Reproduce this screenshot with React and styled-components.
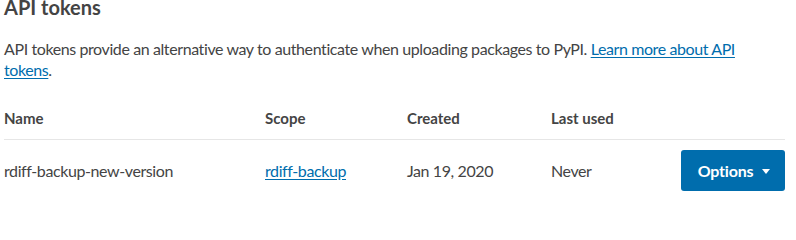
import React from "react";
import styled, { createGlobalStyle } from "styled-components";

const Global = createGlobalStyle`
  html, body { margin: 0; padding: 0; background: #fff; }
  body { font-family: "Lato", "Noto Sans", sans-serif; color: #444; }
`;

const Page = styled.div`
  padding: 0 11px 0 4px;
  margin-top: -5px;
`;

const Heading = styled.h2`
  margin: 0;
  font-size: 20px;
  font-weight: 700;
  line-height: 24px;
  color: #444;
`;

const Intro = styled.p`
  margin: 19px 0 0;
  font-size: 16px;
  line-height: 21px;
  letter-spacing: -0.4px;
`;

const Link = styled.a`
  color: #006dad;
  text-decoration: underline;
  text-underline-offset: 2px;
`;

const Row = styled.div`
  display: grid;
  grid-template-columns: 261px 142px 144px 1fr auto;
  align-items: center;
  border-bottom: ${(p) => (p.$head ? "1px solid #e6e6e6" : "none")};
  padding: ${(p) => (p.$head ? "28px 0 11px" : "10px 0 0")};
  font-size: ${(p) => (p.$head ? "15px" : "16px")};
  line-height: ${(p) => (p.$head ? "20px" : "21px")};
  font-weight: ${(p) => (p.$head ? 700 : 400)};
  letter-spacing: ${(p) => (p.$head ? "0" : "-0.4px")};
`;

const Table = styled.div``;

const Button = styled.button`
  display: flex;
  align-items: center;
  justify-content: center;
  gap: 9px;
  height: 41px;
  width: 104px;
  background: #006dad;
  color: #fff;
  border: none;
  border-radius: 3px;
  font-family: inherit;
  font-size: 16px;
  font-weight: 700;
  letter-spacing: -0.2px;
  padding: 0 0 0 2px;
`;

const Caret = styled.span`
  width: 0;
  height: 0;
  border-left: 4.5px solid transparent;
  border-right: 4.5px solid transparent;
  border-top: 5px solid #fff;
  margin-top: 2px;
`;

export default function App() {
  return (
    <>
      <Global />
      <Page>
        <Heading>API tokens</Heading>
        <Intro>
          API tokens provide an alternative way to authenticate when uploading packages to PyPI.{" "}
          <Link href="#">Learn more about API tokens</Link>.
        </Intro>
        <Table>
          <Row $head>
            <span>Name</span>
            <span>Scope</span>
            <span>Created</span>
            <span>Last used</span>
            <span />
          </Row>
          <Row>
            <span>rdiff-backup-new-version</span>
            <span>
              <Link href="#">rdiff-backup</Link>
            </span>
            <span>Jan 19, 2020</span>
            <span>Never</span>
            <Button>
              Options <Caret />
            </Button>
          </Row>
        </Table>
      </Page>
    </>
  );
}
